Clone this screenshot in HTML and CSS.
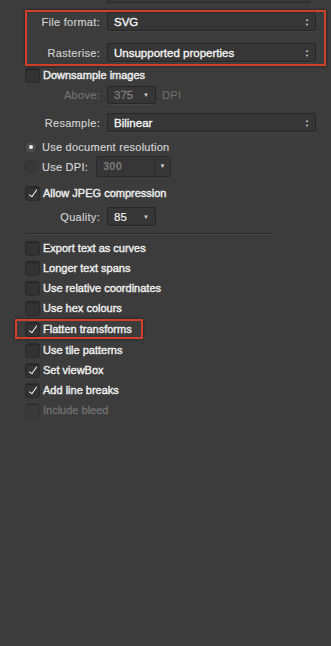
FILE: index.html
```
<!DOCTYPE html>
<html lang="en">
<head>
    <meta charset="UTF-8">
    <meta name="viewport" content="width=device-width, initial-scale=1.0">
    <title>Export SVG</title>
    <link rel="stylesheet" href="styles.css">
</head>
<body>
  <div class="panel">
    <div class="stub"></div>

    <div class="highlight box-format">
      <div class="field">
        <span class="label">File format:</span>
        <div class="select wide"><span>SVG</span><span class="updown"><i>&#9650;</i><i>&#9660;</i></span></div>
      </div>
      <div class="field field-second">
        <span class="label">Rasterise:</span>
        <div class="select wide"><span>Unsupported properties</span><span class="updown"><i>&#9650;</i><i>&#9660;</i></span></div>
      </div>
    </div>

    <label class="check row-downsample"><span class="box"></span>Downsample images</label>

    <div class="field row-above">
      <span class="label disabled">Above:</span>
      <div class="select small disabled"><span>375</span><span class="caret">&#9660;</span></div>
      <span class="unit">DPI</span>
    </div>

    <div class="field row-resample">
      <span class="label">Resample:</span>
      <div class="select wide"><span>Bilinear</span><span class="updown"><i>&#9650;</i><i>&#9660;</i></span></div>
    </div>

    <label class="radio row-docres"><span class="dot on"></span>Use document resolution</label>

    <div class="radio row-dpi">
      <span class="dot"></span><span class="dpi-label">Use DPI:</span>
      <div class="combo"><span class="combo-value">300</span><span class="combo-btn">&#9660;</span></div>
    </div>

    <label class="check row-jpeg"><span class="box checked"></span>Allow JPEG compression</label>

    <div class="field row-quality">
      <span class="label">Quality:</span>
      <div class="select small"><span>85</span><span class="caret">&#9660;</span></div>
    </div>

    <div class="separator"></div>

    <div class="options">
      <label class="check"><span class="box"></span>Export text as curves</label>
      <label class="check"><span class="box"></span>Longer text spans</label>
      <label class="check"><span class="box"></span>Use relative coordinates</label>
      <label class="check"><span class="box"></span>Use hex colours</label>
      <label class="check highlight box-flatten"><span class="box checked"></span>Flatten transforms</label>
      <label class="check"><span class="box"></span>Use tile patterns</label>
      <label class="check"><span class="box checked"></span>Set viewBox</label>
      <label class="check"><span class="box checked"></span>Add line breaks</label>
      <label class="check off"><span class="box"></span>Include bleed</label>
    </div>
  </div>
</body>
</html>
```
FILE: styles.css
```
body {
    margin: 0;
    background: #3c3c3c;
    color: #e4e4e4;
    font-family: "Liberation Sans", Arial, sans-serif;
    font-size: 11px;
    min-height: 646px;
}

.panel {
    display: flex;
    flex-direction: column;
}

.stub {
    margin-left: 107px;
    width: 201px;
    height: 2px;
    border: 1px solid #2a2a2a;
    border-top: none;
    background: #363636;
}

.highlight {
    border: 2px solid #cf3f2a;
    box-shadow: 0 0 3px rgba(0, 0, 0, 0.5);
}

.box-format {
    margin-top: 7px;
    margin-left: 25px;
    width: 297px;
    padding: 0 0 2px 0;
}

.field {
    display: flex;
    align-items: center;
}

.label {
    width: 100px;
    text-align: right;
    color: #d2d2d2;
    letter-spacing: 0.3px;
    -webkit-text-stroke: 0.15px #d2d2d2;
}

.box-format .label {
    width: 73px;
}

.field-second {
    margin-top: 12px;
}

.select {
    display: flex;
    align-items: center;
    justify-content: space-between;
    box-sizing: border-box;
    height: 19px;
    margin-left: 7px;
    padding: 0 6px 0 6px;
    background: #363636;
    border: 1px solid #262626;
    border-radius: 2px;
    box-shadow: 0 1px 0 #444;
    color: #f4f4f4;
    font-size: 11.5px;
    -webkit-text-stroke: 0.35px #f4f4f4;
}

.select.wide {
    width: 209px;
}

.select.small {
    width: 49px;
}

.select.disabled {
    color: #7a7a7a;
    -webkit-text-stroke: 0.35px #7a7a7a;
}

.updown {
    display: flex;
    flex-direction: column;
    font-size: 4px;
    line-height: 5px;
    color: #cfcfcf;
    -webkit-text-stroke: 0;
}

.caret {
    font-size: 6px;
    color: #cfcfcf;
    -webkit-text-stroke: 0;
}

.disabled {
    color: #747474;
    -webkit-text-stroke: 0.15px #747474;
}

.unit {
    margin-left: 6px;
    color: #6f6f6f;
    letter-spacing: 0.3px;
}

.check {
    display: flex;
    align-items: center;
    margin-left: 25px;
    height: 16px;
    color: #eeeeee;
    -webkit-text-stroke: 0.4px #eeeeee;
}

.box {
    flex-shrink: 0;
    width: 13px;
    height: 13px;
    margin-right: 3px;
    background: #333;
    border: 1px solid #2a2a2a;
    border-radius: 3px;
    box-shadow: inset 0 1px 1px rgba(0, 0, 0, 0.3);
    position: relative;
}

.box.checked::after {
    content: "";
    position: absolute;
    left: 5px;
    top: 1px;
    width: 3px;
    height: 8px;
    border: solid #fafafa;
    border-width: 0 1.5px 1.5px 0;
    transform: rotate(35deg);
}

.row-downsample {
    margin-top: 1px;
}

.row-above {
    margin-top: 3px;
    height: 18px;
}

.row-above .select {
    height: 18px;
}

.row-resample {
    margin-top: 9px;
}

.radio {
    display: flex;
    align-items: center;
    margin-left: 24px;
    color: #d6d6d6;
    letter-spacing: 0.25px;
    -webkit-text-stroke: 0.15px #d6d6d6;
}

.dot {
    flex-shrink: 0;
    width: 13px;
    height: 13px;
    margin-right: 5px;
    border-radius: 50%;
    background: #4a4a4a;
    border: 1px solid #333;
    box-sizing: border-box;
    position: relative;
}

.dot.on::after {
    content: "";
    position: absolute;
    left: 3.5px;
    top: 3.5px;
    width: 4px;
    height: 4px;
    border-radius: 50%;
    background: #eee;
}

.row-docres {
    margin-top: 8px;
    height: 14px;
}

.row-dpi {
    margin-top: 2px;
    height: 21px;
}

.row-dpi .dot {
    background: #383838;
}

.dpi-label {
    width: 54px;
}

.combo {
    display: flex;
    width: 75px;
    height: 21px;
    box-sizing: border-box;
    border: 1px solid #2a2a2a;
    border-radius: 2px;
    background: #363636;
}

.combo-value {
    flex: 1;
    padding-left: 6px;
    line-height: 19px;
    color: #7a7a7a;
    font-weight: bold;
    -webkit-text-stroke: 0;
    border-right: 1px solid #2a2a2a;
}

.combo-btn {
    width: 15px;
    text-align: center;
    font-size: 6px;
    line-height: 19px;
    color: #d8d8d8;
    -webkit-text-stroke: 0;
}

.row-jpeg {
    margin-top: 8px;
}

.row-quality {
    margin-top: 6px;
}

.row-quality .select {
    -webkit-text-stroke: 0.15px #f4f4f4;
}

.separator {
    margin-top: 7px;
    margin-left: 25px;
    width: 248px;
    height: 1px;
    background: #2c2c2c;
    border-bottom: 1px solid #464646;
}

.options {
    display: flex;
    flex-direction: column;
    margin-top: 3px;
}

.options .check {
    height: 20px;
}

.box-flatten {
    margin-left: 15px;
    padding-left: 8px;
    width: 116px;
    height: 16px !important;
    margin-top: 1px;
    margin-bottom: 1px;
}

.check.off {
    color: #6e6e6e;
    -webkit-text-stroke: 0.4px #6e6e6e;
}

.check.off .box {
    background: #3a3a3a;
    border-color: #353535;
}
```
